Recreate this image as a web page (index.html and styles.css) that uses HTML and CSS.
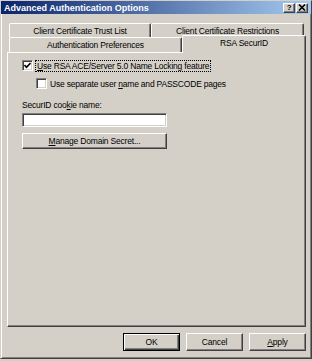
FILE: index.html
```html
<!DOCTYPE html>
<html lang="en">
<head>
    <meta charset="UTF-8">
    <title>Advanced Authentication Options</title>
    <link rel="stylesheet" href="styles.css">
</head>
<body>
    <div class="window">
        <div class="titlebar">
            <span class="title">Advanced Authentication Options</span>
            <div class="caption-btns">
                <span class="cbtn help">?</span>
                <span class="cbtn close">
                    <svg width="8" height="7" viewBox="0 0 8 7">
                        <path d="M1 0.5 L7 6.5 M7 0.5 L1 6.5" stroke="#000" stroke-width="1.6" fill="none"/>
                    </svg>
                </span>
            </div>
        </div>

        <div class="content">
            <div class="tabs">
                <div class="tab-row row-back">
                    <div class="tab tab-trust">Client Certificate Trust List</div>
                    <div class="tab tab-restr">Client Certificate Restrictions</div>
                </div>
                <div class="tab-row row-front">
                    <div class="tab tab-auth">Authentication Preferences</div>
                    <div class="tab tab-rsa selected">RSA SecurID</div>
                </div>
            </div>

            <div class="panel">
                <div class="check-row">
                    <span class="checkbox">
                        <svg width="7" height="7" viewBox="0 0 7 7">
                            <path d="M0.5 3 L2.5 5.3 L6.5 1" stroke="#000" stroke-width="1.6" fill="none"/>
                        </svg>
                    </span>
                    <span class="focus"><u>U</u>se RSA ACE/Server 5.0 Name Locking feature</span>
                </div>
                <div class="check-row sub">
                    <span class="checkbox"></span>
                    <span>Use separate user <u>n</u>ame and PASSCODE pages</span>
                </div>
                <div class="field-label">SecurID coo<u>k</u>ie name:</div>
                <div class="textbox"></div>
                <button class="btn wide"><u>M</u>anage Domain Secret...</button>
            </div>

            <div class="footer">
                <button class="btn btn-default">OK</button>
                <button class="btn">Cancel</button>
                <button class="btn"><u>A</u>pply</button>
            </div>
        </div>
    </div>
</body>
</html>
```

FILE: styles.css
```css
body {
    margin: 0;
    font-family: "Liberation Sans", Arial, sans-serif;
    font-size: 8.5px;
    letter-spacing: -0.2px;
    color: #000;
    background-color: #d4d0c8;
}
.window {
    width: 312px;
    height: 359px;
    box-sizing: border-box;
    border: 1px solid;
    border-color: #d4d0c8 #404040 #404040 #d4d0c8;
    box-shadow: inset 1px 1px #fff, inset -1px -1px #808080;
    background-color: #d4d0c8;
    display: flex;
    flex-direction: column;
}
.titlebar {
    height: 13px;
    background: linear-gradient(to right, #0a246a, #a6caf0);
    display: flex;
    align-items: center;
    justify-content: space-between;
    padding: 0 3px 0 3px;
}
.title {
    color: #fff;
    font-weight: bold;
    font-size: 9px;
    letter-spacing: 0;
}
.caption-btns {
    display: flex;
    gap: 1px;
}
.cbtn {
    width: 12px;
    height: 10px;
    box-sizing: border-box;
    background-color: #d4d0c8;
    border: 1px solid;
    border-color: #fff #404040 #404040 #fff;
    box-shadow: inset -1px -1px #808080;
    display: flex;
    align-items: center;
    justify-content: center;
    font-weight: bold;
    font-size: 8px;
    line-height: 1;
}
.content {
    padding: 9px 5px 0 6px;
}
.tabs {
    display: flex;
    flex-direction: column;
    padding-left: 2px;
}
.tab-row {
    display: flex;
}
.row-back {
    height: 14px;
}
.row-front {
    height: 15px;
    align-items: flex-end;
}
.tab {
    box-sizing: border-box;
    height: 100%;
    border: 1px solid;
    border-bottom: none;
    border-color: #fff #404040 transparent #fff;
    box-shadow: inset -1px 0 #808080;
    border-radius: 2px 2px 0 0;
    display: flex;
    align-items: center;
    justify-content: center;
    background-color: #d4d0c8;
}
.tab-trust { width: 142px; }
.tab-restr { width: 153px; }
.tab-auth { width: 173px; }
.tab-rsa { width: 124px; }
.tab.selected {
    height: 18px;
    margin-bottom: -1px;
    padding-bottom: 3px;
    position: relative;
    z-index: 1;
}
.panel {
    height: 275px;
    box-sizing: border-box;
    border: 1px solid;
    border-color: #fff #404040 #404040 #fff;
    box-shadow: inset -1px -1px #808080;
    padding: 7px 0 0 14px;
}
.check-row {
    display: flex;
    align-items: center;
    gap: 3px;
    height: 11px;
}
.check-row.sub {
    margin-top: 7px;
    padding-left: 14px;
}
.checkbox {
    width: 11px;
    height: 11px;
    box-sizing: border-box;
    background-color: #fff;
    border: 1px solid;
    border-color: #808080 #fff #fff #808080;
    box-shadow: inset 1px 1px #404040, inset -1px -1px #d4d0c8;
    display: flex;
    align-items: center;
    justify-content: center;
}
.focus {
    outline: 1px dotted #000;
    padding: 0 1px;
}
.field-label {
    margin-top: 11px;
    height: 10px;
    line-height: 10px;
}
.textbox {
    margin-top: 3px;
    width: 145px;
    height: 14px;
    box-sizing: border-box;
    background-color: #fff;
    border: 1px solid;
    border-color: #808080 #fff #fff #808080;
    box-shadow: inset 1px 1px #404040, inset -1px -1px #d4d0c8;
}
.btn {
    box-sizing: border-box;
    width: 57px;
    height: 18px;
    padding: 0;
    font: inherit;
    letter-spacing: inherit;
    color: #000;
    background-color: #d4d0c8;
    border: 1px solid;
    border-color: #fff #404040 #404040 #fff;
    box-shadow: inset -1px -1px #808080;
}
.btn.wide {
    display: block;
    margin-top: 6px;
    width: 145px;
    height: 16px;
}
.btn-default {
    border-color: #000;
    box-shadow: inset 1px 1px #fff, inset -1px -1px #404040, inset -2px -2px #808080;
}
.footer {
    display: flex;
    justify-content: flex-end;
    gap: 6px;
    padding-top: 6px;
}
```
